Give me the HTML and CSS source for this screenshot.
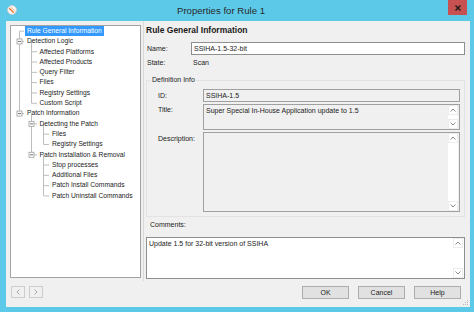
FILE: index.html
```html
<!DOCTYPE html>
<html lang="en">
<head>
  <meta charset="UTF-8">
  <title>Properties for Rule 1</title>
  <link rel="stylesheet" href="styles.css">
</head>
<body>
  <div class="window">
    <div class="titlebar">
      <svg class="app-icon" width="10" height="10" viewBox="0 0 10 10">
        <circle cx="5" cy="5" r="4.5" fill="#f6f6f6" stroke="#c9c9c9" stroke-width="0.8"/>
        <line x1="2.2" y1="3.2" x2="6.8" y2="7.8" stroke="#e57a35" stroke-width="1.3"/>
        <line x1="3.6" y1="1.9" x2="8.1" y2="6.4" stroke="#f0a56d" stroke-width="0.9"/>
      </svg>
      <span class="title">Properties for Rule 1</span>
      <span class="close">
        <svg width="6" height="6" viewBox="0 0 6 6"><path d="M0.5 0.5 L5.5 5.5 M5.5 0.5 L0.5 5.5" stroke="#1a1a1a" stroke-width="1.4"/></svg>
      </span>
    </div>

    <div class="client">
      <div class="main">
        <div class="sidebar">
          <div class="tree">
            <svg class="tree-lines" width="129" height="251" viewBox="0 0 129 251">
              <g stroke="#bdbdbd" stroke-width="1" fill="none">
                <path d="M8.5 5.15 V87.55 M8.5 5.15 H13 M8.5 15.45 H13 M8.5 87.55 H13"/>
                <path d="M20.5 15.45 V77.25 M20.5 25.75 H26 M20.5 36.05 H26 M20.5 46.35 H26 M20.5 56.65 H26 M20.5 66.95 H26 M20.5 77.25 H26"/>
                <path d="M20.5 87.55 V128.75 M20.5 97.85 H26 M20.5 128.75 H26"/>
                <path d="M32.5 97.85 V118.45 M32.5 108.15 H38 M32.5 118.45 H38"/>
                <path d="M32.5 128.75 V169.95 M32.5 139.05 H38 M32.5 149.35 H38 M32.5 159.65 H38 M32.5 169.95 H38"/>
              </g>
              <g fill="#fff" stroke="#9c9c9c" stroke-width="0.8">
                <rect x="6" y="12.95" width="5" height="5"/>
                <rect x="6" y="85.05" width="5" height="5"/>
                <rect x="18" y="95.35" width="5" height="5"/>
                <rect x="18" y="126.25" width="5" height="5"/>
              </g>
              <g stroke="#555" stroke-width="0.8">
                <path d="M7 15.45 H10 M7 87.55 H10 M19 97.85 H22 M19 128.75 H22"/>
              </g>
            </svg>
            <div class="node l0 selected"><span>Rule General Information</span></div>
            <div class="node l0"><span>Detection Logic</span></div>
            <div class="node l1"><span>Affected Platforms</span></div>
            <div class="node l1"><span>Affected Products</span></div>
            <div class="node l1"><span>Query Filter</span></div>
            <div class="node l1"><span>Files</span></div>
            <div class="node l1"><span>Registry Settings</span></div>
            <div class="node l1"><span>Custom Script</span></div>
            <div class="node l0"><span>Patch Information</span></div>
            <div class="node l1"><span>Detecting the Patch</span></div>
            <div class="node l2"><span>Files</span></div>
            <div class="node l2"><span>Registry Settings</span></div>
            <div class="node l1"><span>Patch Installation &amp; Removal</span></div>
            <div class="node l2"><span>Stop processes</span></div>
            <div class="node l2"><span>Additional Files</span></div>
            <div class="node l2"><span>Patch Install Commands</span></div>
            <div class="node l2"><span>Patch Uninstall Commands</span></div>
          </div>
        </div>

        <div class="panel">
          <h1>Rule General Information</h1>
          <div class="row name-row">
            <label>Name:</label>
            <div class="box editable">SSIHA-1.5-32-bit</div>
          </div>
          <div class="row state-row">
            <label>State:</label>
            <span class="value">Scan</span>
          </div>

          <fieldset class="group">
            <legend>Definition Info</legend>
            <div class="row id-row">
              <label>ID:</label>
              <div class="box">SSIHA-1.5</div>
            </div>
            <div class="row title-row">
              <label>Title:</label>
              <div class="box multi">
                <div class="text">Super Special In-House Application update to 1.5</div>
                <div class="vscroll">
                  <span class="arrow"><svg width="6" height="4" viewBox="0 0 6 4"><path d="M0.5 3.5 L3 1 L5.5 3.5" stroke="#8a8a8a" fill="none"/></svg></span>
                  <span class="arrow"><svg width="6" height="4" viewBox="0 0 6 4"><path d="M0.5 0.5 L3 3 L5.5 0.5" stroke="#8a8a8a" fill="none"/></svg></span>
                </div>
              </div>
            </div>
            <div class="row desc-row">
              <label>Description:</label>
              <div class="box multi">
                <div class="text"></div>
                <div class="vscroll">
                  <span class="arrow"><svg width="6" height="4" viewBox="0 0 6 4"><path d="M0.5 3.5 L3 1 L5.5 3.5" stroke="#8a8a8a" fill="none"/></svg></span>
                  <span class="arrow"><svg width="6" height="4" viewBox="0 0 6 4"><path d="M0.5 0.5 L3 3 L5.5 0.5" stroke="#8a8a8a" fill="none"/></svg></span>
                </div>
              </div>
            </div>
          </fieldset>

          <div class="comments-label">Comments:</div>
          <div class="box multi editable comments">
            <div class="text">Update 1.5 for 32-bit version of SSIHA</div>
            <div class="vscroll">
              <span class="arrow"><svg width="6" height="4" viewBox="0 0 6 4"><path d="M0.5 3.5 L3 1 L5.5 3.5" stroke="#8a8a8a" fill="none"/></svg></span>
              <span class="arrow"><svg width="6" height="4" viewBox="0 0 6 4"><path d="M0.5 0.5 L3 3 L5.5 0.5" stroke="#8a8a8a" fill="none"/></svg></span>
            </div>
          </div>
        </div>
      </div>

      <div class="footer">
        <div class="nav">
          <button class="nav-btn"><svg width="4" height="6" viewBox="0 0 4 6"><path d="M3.5 0.5 L1 3 L3.5 5.5" stroke="#a8a8a8" fill="none"/></svg></button>
          <button class="nav-btn"><svg width="4" height="6" viewBox="0 0 4 6"><path d="M0.5 0.5 L3 3 L0.5 5.5" stroke="#a8a8a8" fill="none"/></svg></button>
        </div>
        <div class="actions">
          <button class="btn">OK</button>
          <button class="btn">Cancel</button>
          <button class="btn">Help</button>
        </div>
      </div>

      <svg class="grip" width="6" height="6" viewBox="0 0 6 6">
        <g fill="#b8b8b8">
          <rect x="4" y="0" width="1" height="1"/>
          <rect x="2" y="2" width="1" height="1"/><rect x="4" y="2" width="1" height="1"/>
          <rect x="0" y="4" width="1" height="1"/><rect x="2" y="4" width="1" height="1"/><rect x="4" y="4" width="1" height="1"/>
        </g>
      </svg>
    </div>
  </div>
</body>
</html>
```

FILE: styles.css
```css
html, body {
  margin: 0;
  padding: 0;
}
body {
  background-color: #5cc9e9;
  font-family: 'Liberation Sans', Arial, sans-serif;
  color: #222;
  width: 474px;
  height: 312px;
  overflow: hidden;
}
.window {
  width: 474px;
  height: 312px;
  background-color: #5cc9e9;
}
.titlebar {
  height: 21px;
  display: flex;
  align-items: flex-start;
}
.app-icon {
  margin: 5px 0 0 7px;
  flex-shrink: 0;
}
.title {
  flex: 1;
  text-align: center;
  font-size: 9.6px;
  line-height: 21px;
  color: #2a2a2a;
  padding-right: 23px;
}
.close {
  width: 19px;
  height: 15px;
  margin-right: 7px;
  background-color: #c75050;
  display: flex;
  align-items: center;
  justify-content: center;
}
.client {
  position: relative;
  margin: 0 4px 0 6px;
  height: 286px;
  background-color: #f0f0f0;
  display: flex;
  flex-direction: column;
}
.main {
  display: flex;
  height: 260px;
}
.sidebar {
  padding: 4px 2px 0 4px;
}
.tree {
  position: relative;
  box-sizing: border-box;
  width: 131px;
  height: 253px;
  background-color: #fff;
  border: 1px solid #a3a3a3;
  font-size: 6.7px;
}
.tree-lines {
  position: absolute;
  top: 0;
  left: 0;
}
.node {
  position: relative;
  height: 10.3px;
  line-height: 10.3px;
  white-space: nowrap;
}
.node span {
  display: inline-block;
  padding: 0 2px;
}
.node.l0 span { margin-left: 14px; }
.node.l1 span { margin-left: 26.5px; }
.node.l2 span { margin-left: 39px; }
.node.selected span {
  background-color: #3399ff;
  color: #fff;
}
.panel {
  flex: 1;
  min-width: 0;
  border-left: 1px solid #d9d9d9;
  padding: 0 5px 0 2px;
  font-size: 7px;
}
.panel h1 {
  margin: 4px 0 0;
  font-size: 8.5px;
  line-height: 11px;
  font-weight: bold;
  color: #1a1a1a;
}
.row {
  display: flex;
}
.row label {
  flex-shrink: 0;
  width: 45px;
}
.name-row {
  margin-top: 6px;
  height: 13px;
  line-height: 13px;
}
.name-row label {
  padding-left: 1px;
  width: 44px;
}
.state-row {
  margin-top: 2px;
  height: 12px;
  line-height: 12px;
}
.state-row label {
  padding-left: 1px;
  width: 44px;
}
.state-row .value {
  padding-left: 2px;
}
.box {
  flex: 1;
  box-sizing: border-box;
  border: 1px solid #a0a0a0;
  background-color: #f0f0f0;
  padding: 0 2px;
  line-height: 11px;
  white-space: nowrap;
  overflow: hidden;
}
.box.editable {
  background-color: #fff;
  border-color: #8f8f8f;
}
.group {
  margin: 5px 0 0;
  padding: 3px 4px 4px 11px;
  border: 1px solid #e3e3e3;
  min-width: 0;
}
.group legend {
  font-size: 7px;
  line-height: 12px;
  padding: 0 1px;
  margin-left: -7px;
}
.id-row {
  height: 13px;
  line-height: 13px;
}
.title-row {
  margin-top: 2px;
  height: 26px;
  line-height: 12px;
}
.desc-row {
  margin-top: 2px;
  height: 80px;
  line-height: 12px;
}
.desc-row label {
  padding-top: 1px;
}
.box.multi {
  display: flex;
  padding: 0;
  line-height: 12px;
}
.box.multi .text {
  flex: 1;
  padding: 0 2px;
  overflow: hidden;
}
.vscroll {
  width: 10px;
  margin: 0 1px 0 0;
  display: flex;
  flex-direction: column;
  justify-content: space-between;
  background-color: #fff;
}
.arrow {
  height: 10px;
  display: flex;
  align-items: center;
  justify-content: center;
  border: 1px solid #ececec;
  box-sizing: border-box;
}
.comments-label {
  margin-top: 2px;
  padding-left: 4px;
  line-height: 12px;
}
.comments {
  margin-top: 6px;
  height: 42px;
}
.footer {
  flex: 1;
  display: flex;
  align-items: flex-start;
  padding: 5px 9px 0 5px;
}
.nav {
  display: flex;
  gap: 4px;
}
.nav-btn {
  width: 14px;
  height: 12px;
  padding: 0;
  margin: 0;
  border: 1px solid #cdcdcd;
  background-color: #f0f0f0;
  display: flex;
  align-items: center;
  justify-content: center;
}
.actions {
  margin-left: auto;
  display: flex;
  gap: 9px;
}
.btn {
  width: 47px;
  height: 13px;
  padding: 0;
  margin: 0;
  border: 1px solid #adadad;
  background-color: #e1e1e1;
  font-family: 'Liberation Sans', Arial, sans-serif;
  font-size: 7px;
  line-height: 11px;
  color: #222;
}
.grip {
  position: absolute;
  right: 1px;
  bottom: 1px;
}
```
